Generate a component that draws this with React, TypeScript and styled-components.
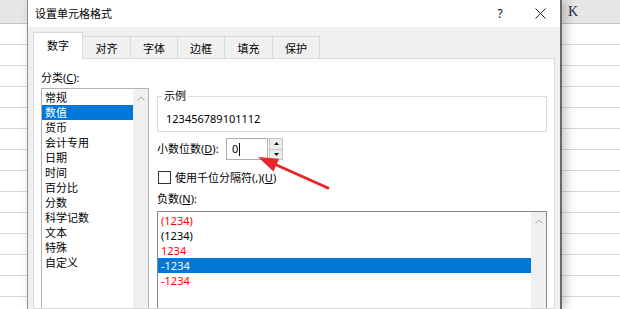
import React from "react";
import styled, { createGlobalStyle } from "styled-components";

const GlobalStyle = createGlobalStyle`
  html, body {
    margin: 0;
    padding: 0;
    background: #fff;
  }
  body {
    font-family: "Noto Sans", "Noto Sans CJK SC", sans-serif;
    font-size: 11px;
    color: #000;
  }
  #root {
    width: 620px;
    height: 309px;
    overflow: hidden;
  }
`;

const Screen = styled.div`
  position: relative;
  display: flex;
  width: 620px;
  height: 309px;
  overflow: hidden;
  background: #fff;
`;

//  spreadsheet behind the dialog
const Sheet = styled.div<{ $width?: number }>`
  display: flex;
  flex-direction: column;
  width: ${p => (p.$width ? `${p.$width}px` : "auto")};
  flex: ${p => (p.$width ? "none" : 1)};
  min-width: 0;
`;

const SheetRow = styled.div<{ $header?: boolean }>`
  display: flex;
  flex: none;
  height: ${p => (p.$header ? 23 : 20)}px;
  background: ${p => (p.$header ? "#e6e6e6" : "#fff")};
  border-bottom: 1px solid ${p => (p.$header ? "#c4c4c4" : "#dadada")};
`;

const SheetCell = styled.div<{ $width?: number }>`
  display: flex;
  align-items: center;
  width: ${p => (p.$width ? `${p.$width}px` : "auto")};
  flex: ${p => (p.$width ? "none" : 1)};
  border-right: ${p => (p.$width ? "1px solid #d4d4d4" : "none")};
  padding-left: 6px;
  font-family: "Liberation Serif", serif;
  font-size: 14px;
  color: #1d2a57;
`;

//  dialog
const Dialog = styled.div`
  flex: none;
  width: 535px;
  box-sizing: border-box;
  display: flex;
  flex-direction: column;
  background: #f0f0f0;
  border-left: 1px solid #8d8d8d;
  border-right: 2px solid #6a6a6a;
  box-shadow: 4px 0 10px rgba(0, 0, 0, 0.22);
  z-index: 1;
`;

const TitleBar = styled.div`
  display: flex;
  align-items: center;
  height: 27px;
  flex: none;
  background: #fff;
  padding-left: 7px;
`;

const Title = styled.div`
  flex: 1;
  line-height: 14px;
  color: #000;
`;

const TitleButton = styled.div`
  width: 40px;
  height: 27px;
  display: flex;
  align-items: center;
  justify-content: center;
  font-size: 12px;
  color: #111;
`;

const Body = styled.div`
  flex: 1;
  display: flex;
  flex-direction: column;
  padding: 5px 5px 0 5px;
  min-height: 0;
`;

const TabStrip = styled.div`
  display: flex;
  align-items: flex-end;
  height: 26px;
  flex: none;
`;

const Tab = styled.div<{ $active?: boolean; $width: number }>`
  position: relative;
  box-sizing: border-box;
  width: ${p => p.$width}px;
  height: ${p => (p.$active ? 27 : 22)}px;
  margin-bottom: ${p => (p.$active ? -1 : 0)}px;
  margin-left: -1px;
  z-index: ${p => (p.$active ? 2 : 1)};
  display: flex;
  align-items: center;
  justify-content: center;
  padding-bottom: ${p => (p.$active ? 2 : 0)}px;
  background: ${p => (p.$active ? "#fff" : "#f0f0f0")};
  border: 1px solid #d9d9d9;
  border-bottom: none;
  &:first-child {
    margin-left: 0;
  }
`;

const Panel = styled.div`
  flex: 1;
  display: grid;
  grid-template-columns: 108px 390px;
  column-gap: 8px;
  align-content: start;
  padding: 12px 6px 0 7px;
  background: #fff;
  border: 1px solid #d9d9d9;
  min-height: 0;
  overflow: hidden;
`;

const Column = styled.div<{ $top?: number }>`
  display: flex;
  flex-direction: column;
  padding-top: ${p => p.$top ?? 0}px;
`;

const Label = styled.div<{ $gap?: number }>`
  line-height: 14px;
  margin-top: ${p => p.$gap ?? 0}px;
`;

const Key = styled.span`
  text-decoration: underline;
`;

const ListBox = styled.div<{ $gap: number; $border: string }>`
  display: flex;
  height: 240px;
  margin-top: ${p => p.$gap}px;
  border: 1px solid ${p => p.$border};
  background: #fff;
`;

const Items = styled.div`
  flex: 1;
  padding-top: 1px;
`;

const Item = styled.div<{ $selected?: boolean; $red?: boolean }>`
  height: 15px;
  line-height: 15px;
  padding-left: 3px;
  white-space: nowrap;
  background: ${p => (p.$selected ? "#0078d7" : "transparent")};
  color: ${p => (p.$selected ? "#fff" : p.$red ? "#ff0000" : "#000")};
`;

const ScrollTrack = styled.div`
  width: 15px;
  flex: none;
  display: flex;
  justify-content: center;
  padding-top: 7px;
  background: #f0f0f0;
`;

const Group = styled.fieldset`
  margin: 0;
  padding: 9px 8px 5px;
  border: 1px solid #dcdcdc;
  min-width: 0;
`;

const Legend = styled.legend`
  padding: 0 2px;
  margin-left: -4px;
  line-height: 14px;
`;

const Sample = styled.div`
  line-height: 14px;
`;

const FieldRow = styled.div`
  display: flex;
  align-items: center;
  height: 22px;
  margin-top: 6px;
`;

const FieldLabel = styled.div`
  width: 69px;
  flex: none;
  line-height: 14px;
`;

const SpinInput = styled.div`
  box-sizing: border-box;
  width: 42px;
  height: 22px;
  display: flex;
  align-items: center;
  padding-left: 5px;
  border: 1px solid #adadad;
  background: #fff;
  line-height: 14px;
`;

const Caret = styled.span`
  width: 1px;
  height: 13px;
  margin-left: 1px;
  background: #000;
`;

const Spinner = styled.div`
  display: flex;
  flex-direction: column;
  width: 14px;
  height: 22px;
  margin-left: 1px;
`;

const SpinButton = styled.div`
  box-sizing: border-box;
  flex: 1;
  display: flex;
  align-items: center;
  justify-content: center;
  background: #ececec;
  border: 1px solid #c4c4c4;
  & + & {
    border-top: none;
  }
`;

const CheckRow = styled.div`
  display: flex;
  align-items: center;
  gap: 4px;
  height: 14px;
  margin-top: 10px;
  padding-left: 1px;
`;

const CheckBox = styled.div`
  box-sizing: border-box;
  width: 13px;
  height: 13px;
  border: 1px solid #333;
  background: #fff;
`;

const Annotation = styled.svg`
  position: absolute;
  left: 0;
  top: 0;
  pointer-events: none;
  z-index: 5;
`;

const categories = [
  "常规", "数值", "货币", "会计专用", "日期", "时间", "百分比",
  "分数", "科学记数", "文本", "特殊", "自定义",
];

const negatives = [
  { text: "(1234)", red: true },
  { text: "(1234)", red: false },
  { text: "1234", red: true },
  { text: "-1234", red: false, selected: true },
  { text: "-1234", red: true },
];

const tabs = [
  { label: "数字", width: 50 },
  { label: "对齐", width: 49 },
  { label: "字体", width: 48 },
  { label: "边框", width: 48 },
  { label: "填充", width: 49 },
  { label: "保护", width: 48 },
];

const Chevron = () => (
  <svg width="8" height="5" viewBox="0 0 8 5">
    <polyline points="0.5,4.5 4,1 7.5,4.5" fill="none" stroke="#a6a6a6" strokeWidth="1" />
  </svg>
);

const Triangle: React.FC<{ up?: boolean }> = ({ up }) => (
  <svg width="5" height="3" viewBox="0 0 5 3">
    <polygon points={up ? "0,3 2.5,0 5,3" : "0,0 5,0 2.5,3"} fill="#111" />
  </svg>
);

const Rows: React.FC<{ cells: (number | undefined)[]; header?: string }> = ({ cells, header }) => (
  <>
    <SheetRow $header>
      {cells.map((w, i) => (
        <SheetCell key={i} $width={w}>{i === 0 ? header : null}</SheetCell>
      ))}
    </SheetRow>
    {Array.from({ length: 14 }).map((_, r) => (
      <SheetRow key={r}>
        {cells.map((w, i) => (
          <SheetCell key={i} $width={w} />
        ))}
      </SheetRow>
    ))}
  </>
);

const App: React.FC = () => {
  return (
    <>
      <GlobalStyle />
      <Screen>
        <Sheet $width={27}>
          <Rows cells={[undefined]} />
        </Sheet>

        <Dialog>
          <TitleBar>
            <Title>设置单元格格式</Title>
            <TitleButton>?</TitleButton>
            <TitleButton>
              <svg width="11" height="11" viewBox="0 0 11 11">
                <path d="M0.5 0.5 L10.5 10.5 M10.5 0.5 L0.5 10.5" stroke="#222" strokeWidth="1" />
              </svg>
            </TitleButton>
          </TitleBar>

          <Body>
            <TabStrip>
              {tabs.map((t, i) => (
                <Tab key={t.label} $width={t.width} $active={i === 0}>
                  {t.label}
                </Tab>
              ))}
            </TabStrip>

            <Panel>
              <Column>
                <Label>分类(<Key>C</Key>):</Label>
                <ListBox $gap={3} $border="#b4b4b4">
                  <Items>
                    {categories.map((c, i) => (
                      <Item key={c} $selected={i === 1}>{c}</Item>
                    ))}
                  </Items>
                  <ScrollTrack>
                    <Chevron />
                  </ScrollTrack>
                </ListBox>
              </Column>

              <Column $top={18}>
                <Group>
                  <Legend>示例</Legend>
                  <Sample>123456789101112</Sample>
                </Group>

                <FieldRow>
                  <FieldLabel>小数位数(<Key>D</Key>):</FieldLabel>
                  <SpinInput>
                    0<Caret />
                  </SpinInput>
                  <Spinner>
                    <SpinButton><Triangle up /></SpinButton>
                    <SpinButton><Triangle /></SpinButton>
                  </Spinner>
                </FieldRow>

                <CheckRow>
                  <CheckBox />
                  <span>使用千位分隔符(,)(<Key>U</Key>)</span>
                </CheckRow>

                <Label $gap={8}>负数(<Key>N</Key>):</Label>
                <ListBox $gap={5} $border="#828790">
                  <Items>
                    {negatives.map((n, i) => (
                      <Item key={i} $red={n.red} $selected={n.selected}>{n.text}</Item>
                    ))}
                  </Items>
                  <ScrollTrack>
                    <Chevron />
                  </ScrollTrack>
                </ListBox>
              </Column>
            </Panel>
          </Body>
        </Dialog>

        <Sheet>
          <Rows cells={[52, undefined]} header="K" />
        </Sheet>

        <Annotation width="620" height="309" viewBox="0 0 620 309">
          <line x1="328" y1="188" x2="272" y2="163" stroke="#e8262b" strokeWidth="3" strokeLinecap="round" />
          <polygon points="258,157 273.5,171.5 279.1,158.7" fill="#e8262b" />
        </Annotation>
      </Screen>
    </>
  );
};

export default App;
